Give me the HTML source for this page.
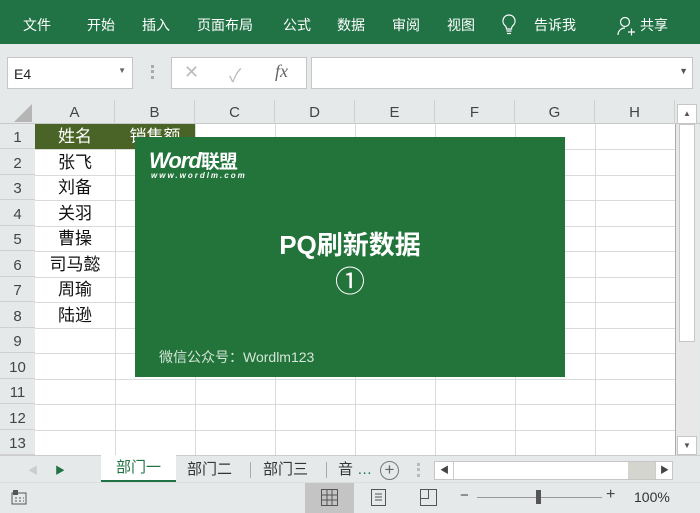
<!DOCTYPE html>
<html><head><meta charset="utf-8"><style>
*{margin:0;padding:0;box-sizing:border-box}
body{width:700px;height:513px;overflow:hidden;background:#e6e9e9;font-family:"Liberation Sans","Noto Sans CJK SC",sans-serif;position:relative}
.abs{position:absolute}
.top{left:0;top:0;width:700px;height:44px;background:#217346;color:#fff;font-size:14px}
.top span{position:absolute;top:15px}
.box{background:#fff;border:1px solid #c6c6c6}
.grid{left:35px;top:124px;width:640px;height:331px;background:#fff}
.ch{top:100px;height:24px;font-size:15px;color:#444;text-align:center;line-height:26px;border-right:1px solid #d0d0d0}
.rh{left:0;width:35px;height:25px;font-size:15px;color:#444;text-align:center;line-height:28px;border-bottom:1px solid #d0d0d0}
.vl{top:124px;width:1px;height:331px;background:#dadada}
.hl{left:35px;width:640px;height:1px;background:#dadada}
.cell{left:35px;width:80px;text-align:center;font-size:17px;color:#111;height:25px;line-height:25px}
</style></head><body>
<div class="abs top">
<span style="left:23px">文件</span><span style="left:87px">开始</span><span style="left:142px">插入</span><span style="left:197px">页面布局</span><span style="left:283px">公式</span><span style="left:337px">数据</span><span style="left:392px">审阅</span><span style="left:447px">视图</span>
<svg class="abs" style="left:501px;top:14px" width="16" height="22" viewBox="0 0 16 22"><path d="M8 1a6 6 0 0 0-4 10.5c1 1 1.5 2 1.5 3.5h5c0-1.5.5-2.5 1.5-3.5A6 6 0 0 0 8 1zM5.5 17h5M6 19.5h4" fill="none" stroke="#fff" stroke-width="1.2"/></svg>
<span style="left:534px">告诉我</span>
<svg class="abs" style="left:617px;top:16px" width="20" height="20" viewBox="0 0 20 20"><circle cx="8" cy="6" r="4.5" fill="none" stroke="#fff" stroke-width="1.2"/><path d="M1 19c0-4 3-7 7-7M11 16h7M14.5 12.5v7" fill="none" stroke="#fff" stroke-width="1.2"/></svg>
<span style="left:640px">共享</span>
</div>
<div class="abs box" style="left:7px;top:57px;width:126px;height:32px;font-size:14px;color:#222;padding:8px 6px">E4<span class="abs" style="right:6px;top:8px;font-size:8px;color:#666">▼</span></div>
<div class="abs" style="left:151px;top:65px;width:3px;height:14px;border-left:3px dotted #aaa"></div>
<div class="abs box" style="left:171px;top:57px;width:136px;height:32px;color:#bbb;font-size:18px">
<span class="abs" style="left:12px;top:4px">✕</span><span class="abs" style="left:57px;top:4px">✓</span><span class="abs" style="left:103px;top:3px;color:#666;font-family:'Liberation Serif';font-style:italic">fx</span></div>
<div class="abs box" style="left:311px;top:57px;width:382px;height:32px"><span class="abs" style="right:4px;top:8px;font-size:9px;color:#555">▼</span></div>
<svg class="abs" style="left:14px;top:104px" width="18" height="18"><path d="M18 0V18H0z" fill="#b5b5b5"/></svg>
<div class="abs" style="left:0;top:100px;width:700px;height:24px;border-bottom:1px solid #c8c8c8"></div>
<div class="abs ch" style="left:35px;width:80px">A</div><div class="abs ch" style="left:115px;width:80px">B</div><div class="abs ch" style="left:195px;width:80px">C</div><div class="abs ch" style="left:275px;width:80px">D</div><div class="abs ch" style="left:355px;width:80px">E</div><div class="abs ch" style="left:435px;width:80px">F</div><div class="abs ch" style="left:515px;width:80px">G</div><div class="abs ch" style="left:595px;width:80px">H</div>
<div class="abs grid"></div>
<div class="abs vl" style="left:115px"></div><div class="abs vl" style="left:195px"></div><div class="abs vl" style="left:275px"></div><div class="abs vl" style="left:355px"></div><div class="abs vl" style="left:435px"></div><div class="abs vl" style="left:515px"></div><div class="abs vl" style="left:595px"></div><div class="abs vl" style="left:675px;background:#aaa"></div>
<div class="abs hl" style="top:149px"></div><div class="abs hl" style="top:175px"></div><div class="abs hl" style="top:200px"></div><div class="abs hl" style="top:226px"></div><div class="abs hl" style="top:251px"></div><div class="abs hl" style="top:277px"></div><div class="abs hl" style="top:302px"></div><div class="abs hl" style="top:328px"></div><div class="abs hl" style="top:353px"></div><div class="abs hl" style="top:379px"></div><div class="abs hl" style="top:404px"></div><div class="abs hl" style="top:430px"></div>
<div class="abs rh" style="top:124px">1</div><div class="abs rh" style="top:150px">2</div><div class="abs rh" style="top:175px">3</div><div class="abs rh" style="top:201px">4</div><div class="abs rh" style="top:226px">5</div><div class="abs rh" style="top:252px">6</div><div class="abs rh" style="top:277px">7</div><div class="abs rh" style="top:303px">8</div><div class="abs rh" style="top:328px">9</div><div class="abs rh" style="top:354px">10</div><div class="abs rh" style="top:379px">11</div><div class="abs rh" style="top:405px">12</div><div class="abs rh" style="top:430px">13</div>
<div class="abs" style="left:35px;top:124px;width:160px;height:25px;background:#4a6326"></div>
<div class="abs cell" style="top:124px;color:#fff">姓名</div><div class="abs cell" style="top:124px;left:115px;color:#fff;overflow:hidden">销售额</div>
<div class="abs cell" style="top:150px">张飞</div><div class="abs cell" style="top:175px">刘备</div><div class="abs cell" style="top:201px">关羽</div><div class="abs cell" style="top:226px">曹操</div><div class="abs cell" style="top:252px">司马懿</div><div class="abs cell" style="top:277px">周瑜</div><div class="abs cell" style="top:303px">陆逊</div>
<div class="abs" style="left:135px;top:137px;width:430px;height:240px;background:#22743a;color:#fff">
<div class="abs" style="left:14px;top:10px;font-size:22px;font-weight:bold;font-style:italic;letter-spacing:-1px">Word<span style="font-style:normal;font-size:19px">联盟</span></div>
<div class="abs" style="left:16px;top:34px;font-size:8px;font-weight:bold;font-style:italic;letter-spacing:2px">www.wordlm.com</div>
<div class="abs" style="left:0;width:430px;top:88px;text-align:center;font-size:26px;font-weight:bold">PQ刷新数据</div>
<div class="abs" style="left:0;width:430px;top:120px;text-align:center;font-size:30px">①</div>
<div class="abs" style="left:24px;top:210px;font-size:14px;color:#d5e5d8">微信公众号：Wordlm123</div>
</div>
<div class="abs" style="left:677px;top:124px;width:20px;height:331px;background:#e8e8e8"></div>
<div class="abs box" style="left:677px;top:104px;width:20px;height:20px;font-size:8px;text-align:center;line-height:18px;color:#555">▲</div>
<div class="abs box" style="left:679px;top:124px;width:16px;height:218px"></div>
<div class="abs box" style="left:677px;top:436px;width:20px;height:19px;font-size:8px;text-align:center;line-height:17px;color:#555">▼</div>
<div class="abs" style="left:0;top:455px;width:700px;height:27px;background:#e6e9e9;border-top:1px solid #ccc"></div>
<div class="abs" style="left:28px;top:462px;font-size:10px;color:#ccc">◀</div><div class="abs" style="left:55px;top:462px;font-size:10px;color:#217346">▶</div>
<div class="abs" style="left:101px;top:455px;width:75px;height:27px;background:#fff;border-bottom:2px solid #217346;color:#217346;font-size:15px;text-align:center;line-height:25px">部门一</div>
<div class="abs" style="left:187px;top:458px;font-size:15px;color:#333">部门二</div><div class="abs" style="left:250px;top:462px;width:1px;height:16px;background:#aaa"></div>
<div class="abs" style="left:263px;top:458px;font-size:15px;color:#333">部门三</div><div class="abs" style="left:326px;top:462px;width:1px;height:16px;background:#aaa"></div>
<div class="abs" style="left:338px;top:458px;font-size:15px;color:#333">音 <span style="color:#217346">…</span></div>
<div class="abs" style="left:380px;top:461px;width:19px;height:19px;border:1px solid #777;border-radius:50%;text-align:center;line-height:16px;font-size:17px;color:#666">+</div>
<div class="abs" style="left:417px;top:463px;border-left:3px dotted #bbb;height:14px"></div>
<div class="abs box" style="left:434px;top:461px;width:239px;height:19px;background:#fff"></div>
<div class="abs" style="left:628px;top:462px;width:27px;height:17px;background:#d5d5d0"></div>
<div class="abs" style="left:440px;top:463px;font-size:9px;color:#444">◀</div><div class="abs" style="left:453px;top:462px;width:1px;height:17px;background:#ccc"></div>
<div class="abs" style="left:655px;top:462px;width:1px;height:17px;background:#ccc"></div><div class="abs" style="left:660px;top:463px;font-size:9px;color:#444">▶</div>
<div class="abs" style="left:0;top:482px;width:700px;height:31px;background:#e6e9e9;border-top:1px solid #ddd"></div>
<svg class="abs" style="left:11px;top:489px" width="16" height="16"><rect x="1" y="4" width="14" height="11" fill="none" stroke="#555"/><rect x="2" y="1" width="5" height="5" fill="#555"/><path d="M4 9h2M8 9h2M12 9h1M4 12h2M8 12h2M12 12h1" stroke="#555"/></svg>
<div class="abs" style="left:305px;top:483px;width:49px;height:30px;background:#c4c4c4"></div>
<svg class="abs" style="left:321px;top:489px" width="17" height="17"><path d="M.5.5h16v16H.5zM6 .5v16M11 .5v16M.5 6h16M.5 11h16" fill="none" stroke="#555"/></svg>
<svg class="abs" style="left:370px;top:489px" width="17" height="17"><path d="M1.5.5h14v16h-14zM5 5h7M5 8h7M5 11h7" fill="none" stroke="#555"/></svg>
<svg class="abs" style="left:420px;top:489px" width="17" height="17"><path d="M.5.5h16v16H.5zM8.5.5v9H.5" fill="none" stroke="#555"/></svg>
<div class="abs" style="left:460px;top:487px;font-size:15px;color:#444">−</div>
<div class="abs" style="left:477px;top:497px;width:125px;height:1px;background:#999"></div>
<div class="abs" style="left:536px;top:490px;width:5px;height:14px;background:#555"></div>
<div class="abs" style="left:606px;top:486px;font-size:16px;color:#444">+</div>
<div class="abs" style="left:634px;top:489px;font-size:14px;color:#333">100%</div>
</body></html>
